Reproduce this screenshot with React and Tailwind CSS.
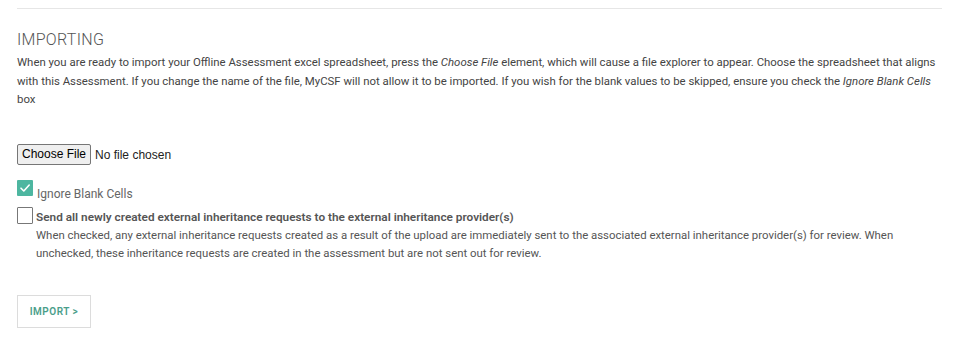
import React, { useState } from 'react';

const font = { fontFamily: 'Roboto, "Noto Sans", sans-serif' };

const ImportSection = () => {
  const [ignoreBlank, setIgnoreBlank] = useState(true);
  const [sendRequests, setSendRequests] = useState(false);

  return (
    <div className="bg-white min-h-screen text-[#444]" style={font}>
      <div className="ml-[17px] mr-[26px] pt-[8px]">
        <div className="border-t border-[#e6e6e6]" />

        {/* heading */}
        <h2 className="mt-[21px] text-[16px] leading-[20px] font-light tracking-[0.3px] text-[#555]">IMPORTING</h2>
        <p className="mt-[3px] text-[11.4px] leading-[18.5px] text-[#444]">
          When you are ready to import your Offline Assessment excel spreadsheet, press the <i>Choose File</i> element, which will cause a file explorer to appear. Choose the spreadsheet that aligns with this Assessment. If you change the name of the file, MyCSF will not allow it to be imported. If you wish for the blank values to be skipped, ensure you check the <i>Ignore Blank Cells</i> box
        </p>

        {/* file picker */}
        <div className="mt-[35px] flex items-center h-[21px]">
          <input
            type="file"
            className="text-[12px] text-[#222] file:mr-[4px] file:px-[4px] file:h-[21px] file:text-[12px] file:border file:border-[#767676] file:rounded-[2px] file:bg-[#efefef] file:text-black"
            style={{ fontFamily: '"Liberation Sans", Arial, sans-serif' }}
          />
        </div>

        {/* ignore blank */}
        <div className="mt-[15px] flex items-start">
          <button
            onClick={() => setIgnoreBlank(!ignoreBlank)}
            className={`w-[16px] h-[16px] shrink-0 rounded-[1px] flex items-center justify-center ${ignoreBlank ? 'bg-[#4db6a0]' : 'border border-[#888] bg-white'}`}
          >
            {ignoreBlank && (
              <svg width="12" height="12" viewBox="0 0 12 12" fill="none">
                <path d="M2 6.2 L4.8 9 L10.2 3" stroke="white" strokeWidth="1.6" strokeLinecap="round" strokeLinejoin="round" />
              </svg>
            )}
          </button>
          <span className="ml-[4px] mt-[6px] text-[12px] leading-[16px] text-[#666]">Ignore Blank Cells</span>
        </div>

        {/* send requests */}
        <div className="mt-[5px] flex items-start">
          <button
            onClick={() => setSendRequests(!sendRequests)}
            className={`w-[16px] h-[17px] shrink-0 rounded-[1px] border border-[#777] ${sendRequests ? 'bg-[#4db6a0]' : 'bg-white'}`}
          />
          <div className="ml-[3px] mt-[1px]">
            <div className="text-[11.8px] leading-[18px] font-semibold text-[#555]">
              Send all newly created external inheritance requests to the external inheritance provider(s)
            </div>
            <div className="text-[11.4px] leading-[18px] text-[#555]">
              When checked, any external inheritance requests created as a result of the upload are immediately sent to the associated external inheritance provider(s) for review. When unchecked, these inheritance requests are created in the assessment but are not sent out for review.
            </div>
          </div>
        </div>

        {/* import button */}
        <button className="mt-[33px] w-[74px] h-[33px] border border-[#dcdcdc] bg-white text-[10px] font-semibold tracking-[0.5px] text-[#4a9e8a]">
          IMPORT &gt;
        </button>
      </div>
    </div>
  );
};

export default function App() {
  return <ImportSection />;
}
